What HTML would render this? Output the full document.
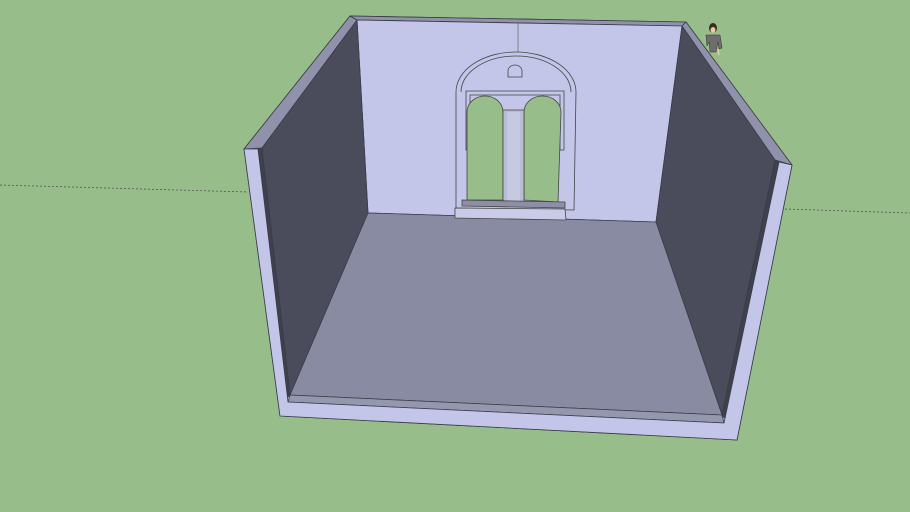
<!DOCTYPE html>
<html><head><style>html,body{margin:0;padding:0;background:#97bd89;width:910px;height:512px;overflow:hidden}</style></head>
<body>
<svg width="910" height="512" viewBox="0 0 910 512" xmlns="http://www.w3.org/2000/svg">
<rect width="910" height="512" fill="#97bd8a"/>
<line x1="0" y1="185" x2="248" y2="192" stroke="#555" stroke-width="0.8" stroke-dasharray="2,2"/>
<line x1="785" y1="209" x2="910" y2="213" stroke="#555" stroke-width="0.8" stroke-dasharray="2,2"/>
<g stroke="#3a3c48" stroke-width="0.8" stroke-linejoin="round">
<!-- outer silhouette (front faces light) -->
<polygon points="350,16 686,22 792,165 737,440 280,416 244,149" fill="#c3c6e8"/>
<!-- top strips -->
<polygon points="350,16 357,20 262,148 244,149" fill="#8f92aa"/>
<polygon points="350,16 686,22 682,26 357,20" fill="#8f92aa"/>
<polygon points="686,22 792,165 775,160 682,26" fill="#8f92aa"/>
<!-- back wall -->
<polygon points="357,20 682,26 656,222 368,213" fill="#c3c6e8"/>
<!-- left dark wall -->
<polygon points="357,20 368,213 290,395 262,148" fill="#4a4c5c"/>
<polygon points="258,149 262,148 290,395 287,398" fill="#3e404d"/>
<!-- right dark wall -->
<polygon points="682,26 775,160 722,415 656,222" fill="#4a4c5c"/>
<polygon points="775,160 779,162 726,420 722,415" fill="#3e404d"/>
<!-- floor -->
<polygon points="368,213 656,222 722,415 290,395" fill="#898ba2"/>
<polygon points="290,395 722,415 724,423 288,402" fill="#9597ae"/>
<!-- front face -->
<polygon points="244,149 258,149 288,402 724,423 779,162 792,165 737,440 280,416" fill="#c3c6e8"/>
</g>
<line x1="518" y1="22" x2="518" y2="52" stroke="#555" stroke-width="0.6"/>
<!-- arch door -->
<g stroke="#444" stroke-width="0.8">
<path d="M456,208 L456,92 A60,40 0 0 1 576,92 L574,210 Z" fill="#c3c6e8"/>
<path d="M461,92 A55,36 0 0 1 571,92" fill="none"/>
<path d="M466,91 L564,91 L564,150 L560,150 L560,95 L470,95 L470,150 L466,150 Z" fill="#c3c6e8"/>
<line x1="470" y1="95" x2="560" y2="95" stroke="#666"/>
<path d="M508,77 L508,71 A7,6 0 0 1 522,71 L522,77 Z" fill="#c3c6e8"/>
<path d="M467,200 L467,112 A18,16 0 0 1 503,112 L503,200 Z" fill="#97bd8a"/>
<path d="M524,200 L524,112 A18.5,16 0 0 1 561,112 L558,202 Z" fill="#97bd8a"/>
<rect x="503" y="110" width="21" height="96" fill="#b9bcd6"/>
<rect x="507" y="112" width="13" height="94" fill="#c6c9e2" stroke="none"/>
<polygon points="462,200 565,202 565,208 462,206" fill="#8d8fa6"/>
<polygon points="455,208 565,209 566,220 455,218" fill="#c9cbe8"/>
</g>
<!-- person -->
<g>
<ellipse cx="713" cy="28" rx="4" ry="5" fill="#3b2a20"/>
<ellipse cx="713" cy="30" rx="2.5" ry="3" fill="#e9c9a6"/>
<path d="M706,35 L720,35 L722,48 L719,49 L718,42 L716,52 L710,52 L709,42 L707,46 Z" fill="#6d6d6d" stroke="#333" stroke-width="0.5"/>
<line x1="718" y1="49" x2="719" y2="55" stroke="#e9c9a6" stroke-width="1.5"/>
</g>
</svg>
</body></html>
